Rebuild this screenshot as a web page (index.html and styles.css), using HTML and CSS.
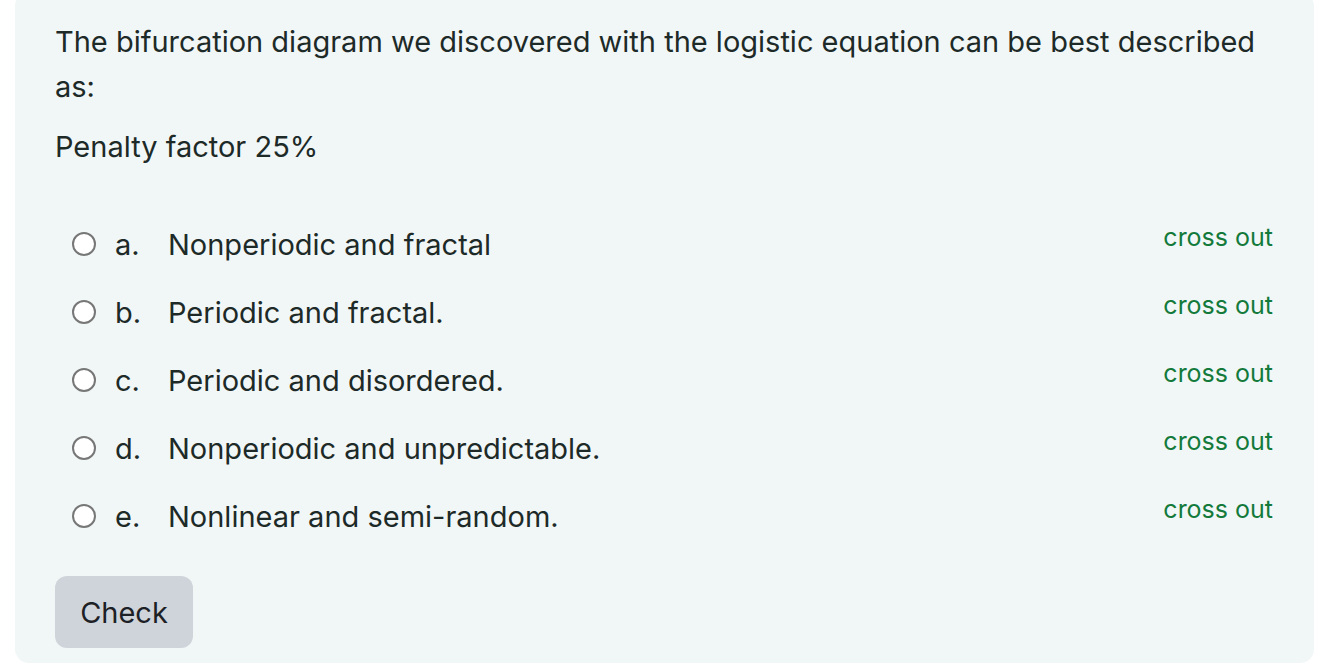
FILE: index.html
```
<!DOCTYPE html>
<html>
    <head>
        <title>Question</title>
        <link rel="stylesheet" href="styles.css">
    </head>
    <body>
        <div class="que">
            <div class="qtext">
                <p>The bifurcation diagram we discovered with the logistic equation can be best described as:</p>
                <p>Penalty factor 25%</p>
            </div>
            <div class="answer">
                <div class="option">
                    <span class="radio"></span>
                    <span class="letter">a.</span>
                    <span class="label">Nonperiodic and fractal</span>
                    <a class="cross" href="#">cross out</a>
                </div>
                <div class="option">
                    <span class="radio"></span>
                    <span class="letter">b.</span>
                    <span class="label">Periodic and fractal.</span>
                    <a class="cross" href="#">cross out</a>
                </div>
                <div class="option">
                    <span class="radio"></span>
                    <span class="letter">c.</span>
                    <span class="label">Periodic and disordered.</span>
                    <a class="cross" href="#">cross out</a>
                </div>
                <div class="option">
                    <span class="radio"></span>
                    <span class="letter">d.</span>
                    <span class="label">Nonperiodic and unpredictable.</span>
                    <a class="cross" href="#">cross out</a>
                </div>
                <div class="option">
                    <span class="radio"></span>
                    <span class="letter">e.</span>
                    <span class="label">Nonlinear and semi-random.</span>
                    <a class="cross" href="#">cross out</a>
                </div>
            </div>
            <button class="check">Check</button>
        </div>
    </body>
</html>
```
FILE: styles.css
```
html, body {
    height: 664px;
    overflow: hidden;
}

body {
    margin: 0;
    padding: 0 8px 0 15px;
    font-family: Inter, "Noto Sans", sans-serif;
    color: #1d2a28;
    background-color: #ffffff;
}

.que {
    margin-top: -8px;
    background-color: #f1f7f7;
    border-radius: 14px;
    padding: 27px 41px 0 40px;
    height: 671px;
    box-sizing: border-box;
}

.qtext p {
    margin: 0 0 15px 0;
    font-size: 29px;
    line-height: 45px;
}

.answer {
    margin-top: 41px;
}

.option {
    display: flex;
    align-items: center;
    height: 68px;
    padding-left: 17px;
    font-size: 29px;
}

.radio {
    width: 20px;
    height: 20px;
    border: 2px solid #777;
    border-radius: 50%;
    background-color: #fff;
    margin-right: 19px;
}

.letter {
    width: 53px;
}

.label {
    flex: 1;
}

.cross {
    color: #137a3b;
    text-decoration: none;
    font-size: 25px;
    margin-bottom: 14px;
}

.check {
    margin-top: 26px;
    font-family: Inter, "Noto Sans", sans-serif;
    font-size: 29px;
    color: #1d2125;
    background-color: #ced4da;
    border: none;
    border-radius: 12px;
    width: 138px;
    height: 72px;
}
```
